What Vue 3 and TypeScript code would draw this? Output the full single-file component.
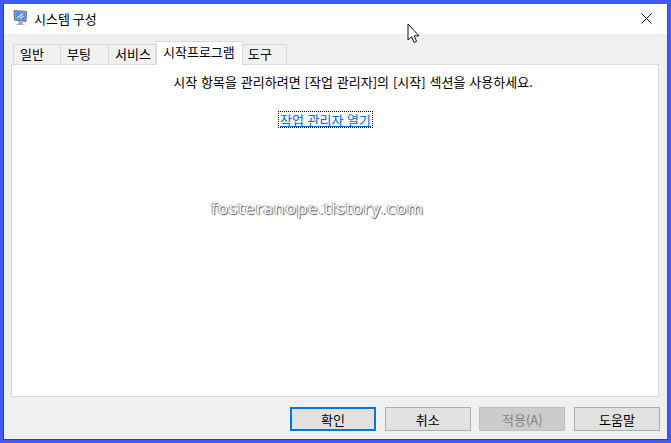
<template>
  <div class="screen">
    <div class="window">
      <header class="titlebar">
        <svg class="app-icon" width="18" height="18" viewBox="0 0 18 18">
          <path d="M2 1.5 L14.5 2.5 L14 12.5 L2.5 11 Z" fill="#8f9fc4" stroke="#5f6f96" stroke-width="1" />
          <path d="M3.5 3 L13 3.8 L12.6 11 L3.8 9.8 Z" fill="#4f8fd8" />
          <path d="M5 9 L11 4.5 M8 9.5 L11.5 7" stroke="#dceaf8" stroke-width="1.2" />
          <path d="M6.5 12 L10.5 12.5 L11 15 L13.5 16 L3.5 16 L6.5 14.5 Z" fill="#a9adb8" />
        </svg>
        <span class="title">시스템 구성</span>
        <svg class="close" width="11" height="11" viewBox="0 0 11 11">
          <path d="M0.5 0.5 L10.5 10.5 M10.5 0.5 L0.5 10.5" stroke="#111" stroke-width="1" fill="none" />
        </svg>
      </header>

      <div class="body">
        <nav class="tabs">
          <div
            v-for="tab in tabs"
            :key="tab.label"
            class="tab"
            :class="{ active: tab.active }"
            :style="{ width: tab.width + 'px' }"
          >
            {{ tab.label }}
          </div>
        </nav>

        <section class="panel">
          <p class="message">시작 항목을 관리하려면 [작업 관리자]의 [시작] 섹션을 사용하세요.</p>
          <a class="link">작업 관리자 열기</a>
        </section>

        <footer class="buttons">
          <button class="btn primary">확인</button>
          <button class="btn">취소</button>
          <button class="btn disabled">적용(A)</button>
          <button class="btn">도움말</button>
        </footer>
      </div>

      <div class="watermark">fosteranope.tistory.com</div>

      <svg class="cursor" width="14" height="21" viewBox="0 0 14 21">
        <path d="M1 1 L1 17 L4.6 13.6 L7 19.5 L9.6 18.4 L7.2 12.8 L12 12.8 Z" fill="#fff" stroke="#111" stroke-width="1" />
      </svg>
    </div>
  </div>
</template>

<script setup lang="ts">
interface Tab {
  label: string
  width: number
  active?: boolean
}

const tabs: Tab[] = [
  { label: '일반', width: 48 },
  { label: '부팅', width: 48 },
  { label: '서비스', width: 47 },
  { label: '시작프로그램', width: 87, active: true },
  { label: '도구', width: 44 }
]
</script>

<style>
html,
body {
  margin: 0;
  background: #3f5bff;
}
</style>

<style scoped>
.screen {
  box-sizing: border-box;
  width: 671px;
  height: 443px;
  padding: 4px 3px 3px 3px;
  background: #3f5bff;
  font-family: "Noto Sans CJK KR", "Noto Sans", sans-serif;
  font-size: 13px;
  color: #000;
  overflow: hidden;
}

.window {
  position: relative;
  box-sizing: border-box;
  display: flex;
  flex-direction: column;
  height: 100%;
  border-left: 1px solid #444;
  border-bottom: 1px solid #444;
  border-right: 1px solid #555;
  background: #f0f0f0;
}

.titlebar {
  display: flex;
  align-items: center;
  height: 30px;
  flex: none;
  box-sizing: border-box;
  padding: 0 15px 2px 8px;
  background: #fff;
}

.app-icon {
  flex: none;
}

.title {
  margin-left: 4px;
}

.close {
  margin-left: auto;
}

.body {
  display: flex;
  flex-direction: column;
  flex: 1;
  min-height: 0;
  padding: 8px 8px 8px 7px;
}

.tabs {
  display: flex;
  align-items: flex-end;
  height: 22px;
  flex: none;
  padding-left: 2px;
  position: relative;
  z-index: 1;
}

.tab {
  box-sizing: border-box;
  display: flex;
  align-items: center;
  height: 20px;
  padding: 0 0 2px 6px;
  border: 1px solid #d9d9d9;
  border-left: none;
  border-bottom: none;
  background: #f0f0f0;
  line-height: 1;
}

.tab:first-child {
  border-left: 1px solid #d9d9d9;
}

.tab:last-child {
  padding-left: 5px;
}

.tab.active {
  height: 24px;
  margin-bottom: -1px;
  border-left: 1px solid #d9d9d9;
  background: #fff;
  padding: 0 0 5px 6px;
}

.panel {
  flex: 1;
  min-height: 0;
  display: flex;
  flex-direction: column;
  align-items: center;
  border: 1px solid #d9d9d9;
  background: #fff;
}

.message {
  margin: 8px 0 0 0;
  line-height: 18px;
  padding-left: 36px;
  word-spacing: 1px;
  white-space: nowrap;
}

.link {
  margin-top: 21px;
  margin-right: 19px;
  padding: 0 1px;
  line-height: 15px;
  color: #0066cc;
  outline: 1px dotted #000;
  text-decoration: underline;
  word-spacing: 0.7px;
}

.buttons {
  display: flex;
  justify-content: flex-end;
  gap: 8.67px;
  flex: none;
  margin-right: -1px;
  padding-top: 10px;
}

.btn {
  box-sizing: border-box;
  width: 86px;
  height: 24px;
  padding: 0;
  border: 1px solid #adadad;
  background: #e1e1e1;
  font: inherit;
  line-height: 1;
  color: #000;
}

.btn.primary {
  border: 2px solid #0078d7;
}

.btn.disabled {
  background: #cccccc;
  border-color: #bfbfbf;
  color: #838383;
}

.watermark {
  position: absolute;
  left: 207px;
  top: 192px;
  font-family: "Open Sans", sans-serif;
  font-size: 17px;
  line-height: 24px;
  letter-spacing: 1px;
  color: #fff;
  text-shadow: 1px 1px 1px #555, -1px 0 1px #888;
}

.cursor {
  position: absolute;
  left: 403px;
  top: 19px;
}
</style>
